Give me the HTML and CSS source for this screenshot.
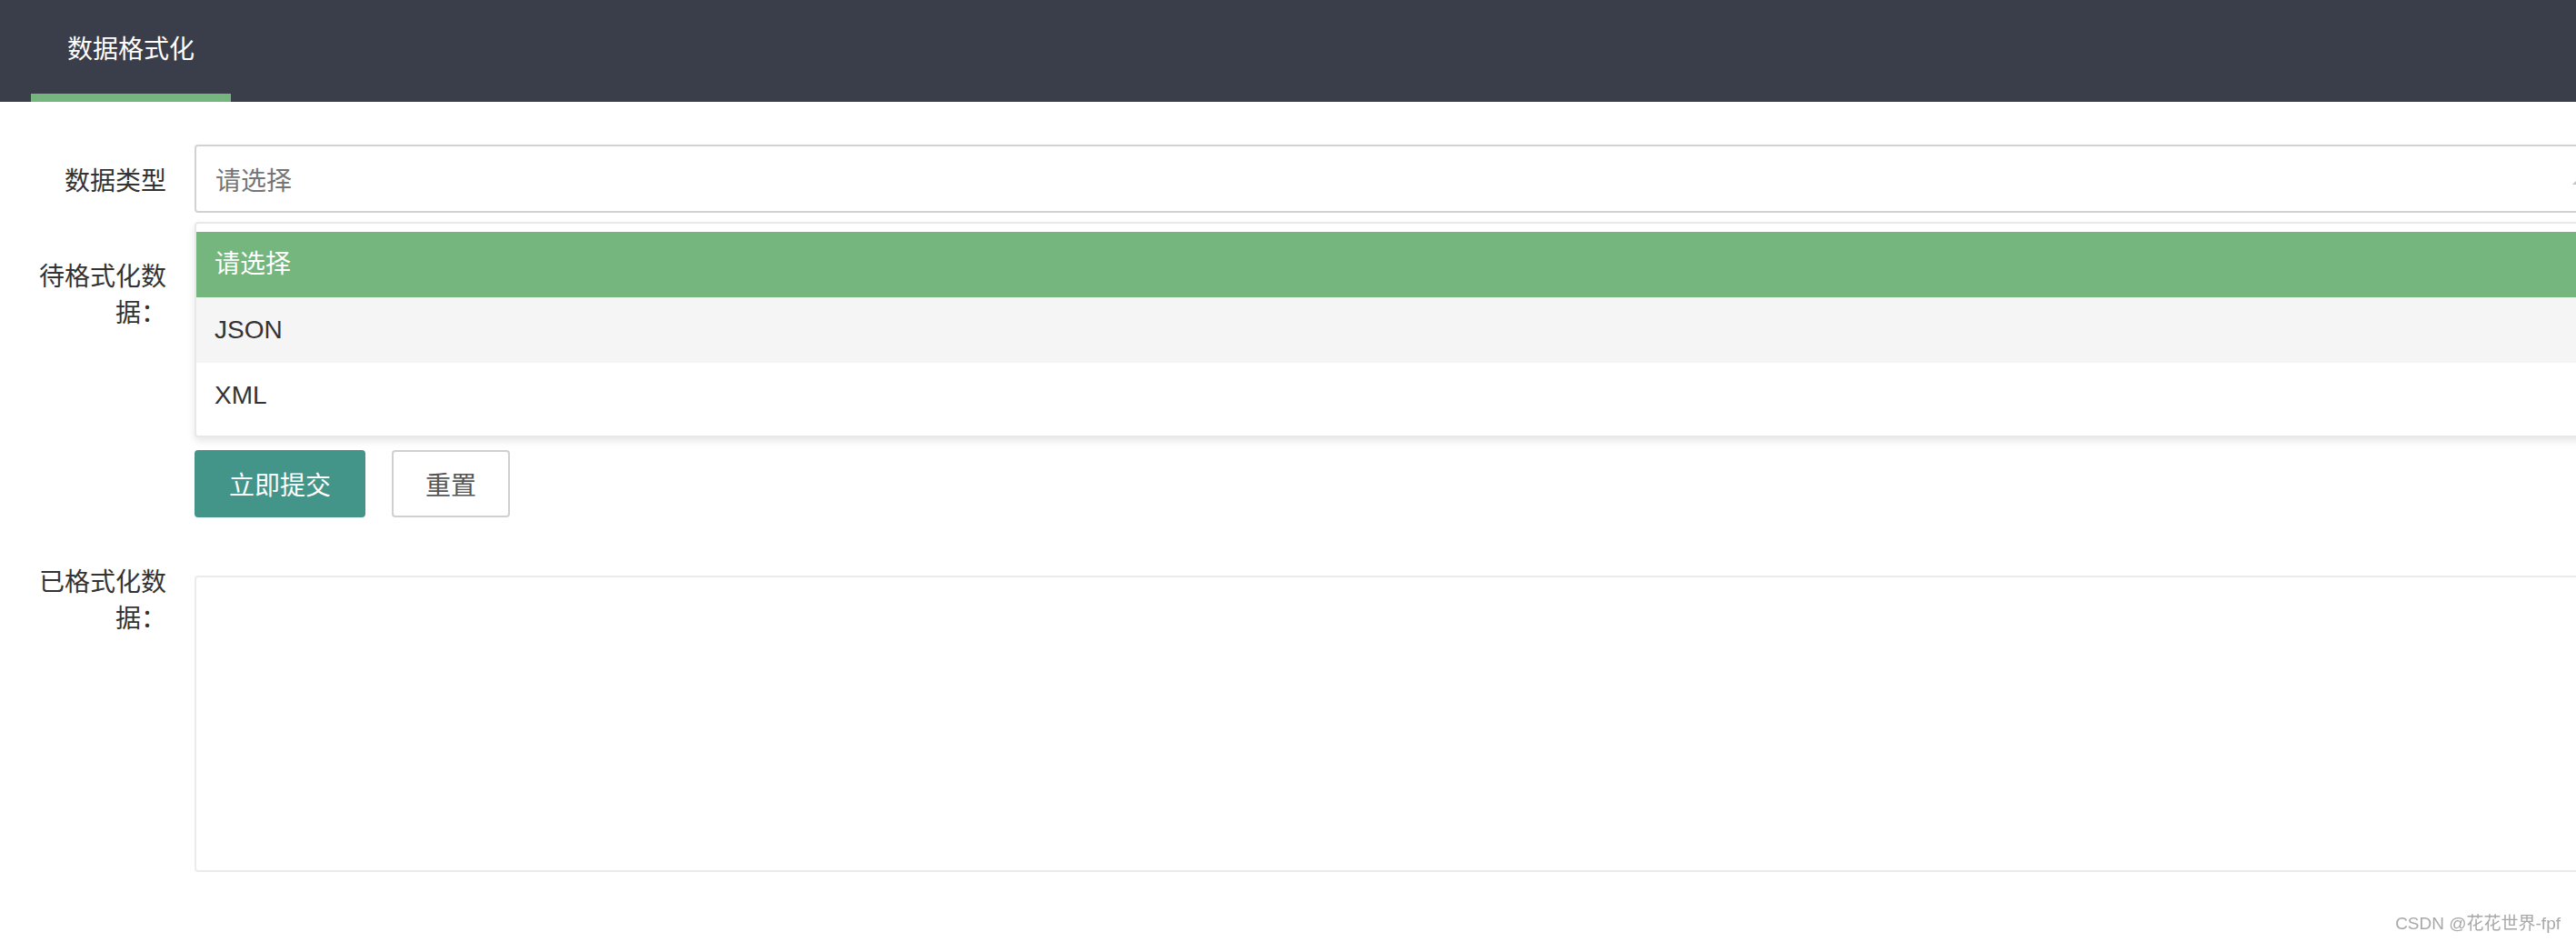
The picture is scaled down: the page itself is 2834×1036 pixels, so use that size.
FILE: index.html
```html
<!DOCTYPE html>
<html lang="zh-CN">
<head>
<meta charset="utf-8">
<title>数据格式化</title>
<link rel="stylesheet" href="styles.css">
</head>
<body>
<div class="page">
  <div class="header">
    <ul class="nav">
      <li class="nav-item active">数据格式化<span class="nav-bar"></span></li>
    </ul>
  </div>
  <form class="form">
    <div class="form-item item-type">
      <label class="form-label">数据类型</label>
      <div class="input-block">
        <div class="select">
          <div class="select-title">
            <input class="input" type="text" placeholder="请选择" readonly>
            <i class="edge"></i>
          </div>
          <dl class="options">
            <dd class="opt selected">请选择</dd>
            <dd class="opt hover">JSON</dd>
            <dd class="opt">XML</dd>
          </dl>
        </div>
      </div>
    </div>
    <div class="form-item item-source">
      <label class="form-label">待格式化数据：</label>
      <div class="input-block">
        <textarea class="textarea textarea-source"></textarea>
      </div>
    </div>
    <div class="form-item item-buttons">
      <div class="form-label"></div>
      <div class="input-block buttons">
        <button type="button" class="btn btn-primary">立即提交</button>
        <button type="button" class="btn btn-plain">重置</button>
      </div>
    </div>
    <div class="form-item item-result">
      <label class="form-label">已格式化数据：</label>
      <div class="input-block">
        <textarea class="textarea textarea-result"></textarea>
      </div>
    </div>
  </form>
</div>
<div class="watermark">CSDN @花花世界-fpf</div>
</body>
</html>
```

FILE: styles.css
```css
html, body {
  margin: 0;
  padding: 0;
  overflow: hidden;
  background: #fff;
}
body {
  font-family: "Liberation Sans", "Noto Sans CJK SC", sans-serif;
  color: #333;
}
.page {
  width: 2876px;
}
.header {
  background: #3a3d4a;
  height: 112px;
}
.nav {
  list-style: none;
  margin: 0;
  padding: 0 0 0 34px;
  display: flex;
  height: 112px;
}
.nav-item {
  position: relative;
  padding: 0 40px;
  height: 112px;
  line-height: 104px;
  font-size: 28px;
  color: #fff;
  font-family: "Noto Sans CJK SC", sans-serif;
}
.nav-bar {
  position: absolute;
  left: 0;
  right: 0;
  bottom: 0;
  height: 9px;
  background: #74b67d;
}
.form {
  display: block;
  margin: 0;
}
.form-item {
  display: flex;
  align-items: flex-start;
}
.form-label {
  flex: none;
  box-sizing: border-box;
  width: 214px;
  padding: 18px 31px 0 43px;
  line-height: 40px;
  font-size: 28px;
  text-align: right;
  color: #333;
  font-family: "Noto Sans CJK SC", sans-serif;
}
.input-block {
  width: 2662px;
}
.item-type {
  margin-top: 47px;
  margin-bottom: 29px;
  position: relative;
  z-index: 2;
}
.item-source {
  margin-bottom: 30px;
}
.item-source .form-label {
  padding-top: 19px;
}
.item-buttons {
  margin-bottom: 30px;
}
.item-result .form-label {
  padding-top: 19px;
}
.select {
  position: relative;
}
.select-title {
  position: relative;
}
.input {
  display: block;
  box-sizing: border-box;
  width: 100%;
  height: 75px;
  margin: 0;
  padding: 0 60px 0 21px;
  border: 2px solid #d2d2d2;
  border-radius: 4px;
  background: #fff;
  font-size: 28px;
  font-family: "Noto Sans CJK SC", sans-serif;
  color: #333;
  outline: none;
}
.input::placeholder {
  color: #757575;
}
.edge {
  position: absolute;
  right: 22px;
  top: 50%;
  margin-top: -6px;
  width: 0;
  height: 0;
  border-style: solid;
  border-width: 0 12px 12px 12px;
  border-color: transparent transparent #c2c2c2 transparent;
}
.options {
  position: absolute;
  left: 0;
  right: 0;
  top: 85px;
  margin: 0;
  padding: 9px 0 8px;
  box-sizing: border-box;
  border: 2px solid #e8e8e8;
  border-radius: 4px;
  background: #fff;
  box-shadow: 0 4px 8px rgba(0, 0, 0, 0.10);
}
.opt {
  margin: 0;
  padding: 0 20px;
  height: 72px;
  line-height: 72px;
  font-size: 28px;
  color: #333;
  font-family: "Liberation Sans", "Noto Sans CJK SC", sans-serif;
}
.opt.selected {
  background: #74b67d;
  color: #fff;
}
.opt.hover {
  background: #f5f5f5;
}
.textarea {
  display: block;
  box-sizing: border-box;
  width: 100%;
  margin: 0;
  padding: 12px 20px;
  border: 2px solid #ebebeb;
  border-radius: 4px;
  background: #fff;
  resize: none;
  font-size: 28px;
  outline: none;
}
.textarea-source {
  height: 202px;
}
.textarea-result {
  margin-top: 34px;
  height: 326px;
}
.buttons {
  display: flex;
  gap: 29px;
}
.btn {
  box-sizing: border-box;
  height: 74px;
  padding: 0 36px;
  margin: 0;
  border-radius: 4px;
  font-size: 28px;
  font-family: "Noto Sans CJK SC", sans-serif;
  cursor: pointer;
}
.btn-primary {
  background: #43958a;
  border: none;
  color: #fff;
  width: 188px;
}
.btn-plain {
  background: #fff;
  border: 2px solid #d0d0d0;
  color: #555;
  width: 130px;
  padding: 0;
}
.watermark {
  position: fixed;
  right: 17px;
  bottom: 8px;
  font-size: 19px;
  line-height: 24px;
  color: #a8a8a8;
  font-family: "Liberation Sans", "Noto Sans CJK SC", sans-serif;
}
```
